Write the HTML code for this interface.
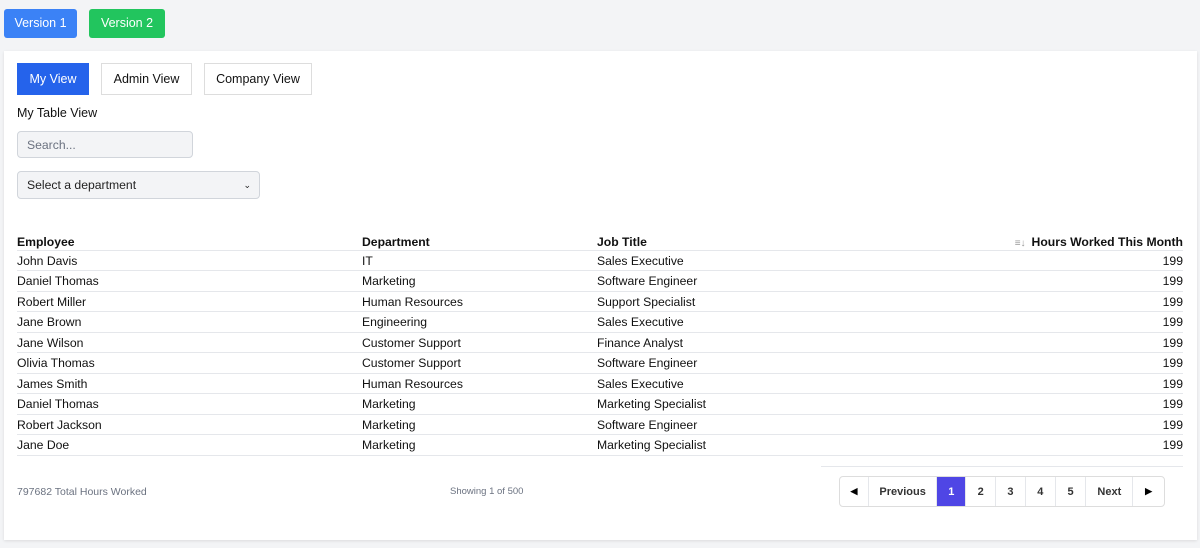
<!DOCTYPE html>
<html><head><style>
*{box-sizing:border-box;margin:0;padding:0}
body{width:1200px;height:548px;background:#f3f4f6;font-family:"Liberation Sans",sans-serif;position:relative;overflow:hidden;color:#111}
.abs{position:absolute}
.vbtn{position:absolute;top:9px;height:29px;color:#fff;font-size:12.5px;line-height:29px;text-align:center;border-radius:3px}
.card{position:absolute;left:4px;top:51px;width:1193px;height:489px;background:#fff;box-shadow:0 1px 3px rgba(0,0,0,.1)}
.tab{position:absolute;top:63px;height:32px;line-height:30px;font-size:12.5px;text-align:center;border:1px solid #ddd;background:#fff}
table{position:absolute;left:17px;top:230px;width:1166px;border-collapse:collapse;font-size:12.2px}
th{text-align:left;font-weight:bold;height:20px;border-bottom:1px solid #e5e7eb;padding:0;vertical-align:bottom;padding-bottom:1px}
td{height:20.5px;border-bottom:1px solid #e5e7eb;padding:0;padding-top:1px}
.r{text-align:right}
.pg{position:absolute;top:476px;height:31px;left:839px;width:326px;border:1px solid #ddd;border-radius:4px;display:flex;font-size:11px;font-weight:bold;color:#333;overflow:hidden}
.pg div{display:flex;align-items:center;justify-content:center;border-right:1px solid #e5e7eb}
.pg div:last-child{border-right:none}
.tri{font-size:9px;color:#000}
</style></head><body>
<div class="vbtn" style="left:4px;width:73px;background:#3b82f6">Version 1</div>
<div class="vbtn" style="left:89px;width:76px;background:#22c55e">Version 2</div>
<div class="card"></div>
<div class="tab" style="left:17px;width:72px;background:#2563eb;color:#fff;border-color:#2563eb">My View</div>
<div class="tab" style="left:101px;width:91px">Admin View</div>
<div class="tab" style="left:204px;width:108px">Company View</div>
<div class="abs" style="left:17px;top:106px;font-size:12.5px">My Table View</div>
<div class="abs" style="left:17px;top:131px;width:176px;height:27px;background:#f3f4f6;border:1px solid #d1d5db;border-radius:4px;font-size:12.2px;color:#6b7280;line-height:26px;padding-left:9px">Search...</div>
<div class="abs" style="left:17px;top:171px;width:243px;height:28px;background:#f3f4f6;border:1px solid #d1d5db;border-radius:4px;font-size:12.2px;color:#222;line-height:27px;padding-left:9px">Select a department<span style="position:absolute;right:8px;top:0;font-size:9px">&#8964;</span></div>
<table>
<tr><th style="width:345px">Employee</th><th style="width:235px">Department</th><th>Job Title</th><th class="r"><span style="color:#999;font-size:10px;font-weight:normal;margin-right:6px">&#8801;&#8595;</span>Hours Worked This Month</th></tr>
<tr><td>John Davis</td><td>IT</td><td>Sales Executive</td><td class="r">199</td></tr>
<tr><td>Daniel Thomas</td><td>Marketing</td><td>Software Engineer</td><td class="r">199</td></tr>
<tr><td>Robert Miller</td><td>Human Resources</td><td>Support Specialist</td><td class="r">199</td></tr>
<tr><td>Jane Brown</td><td>Engineering</td><td>Sales Executive</td><td class="r">199</td></tr>
<tr><td>Jane Wilson</td><td>Customer Support</td><td>Finance Analyst</td><td class="r">199</td></tr>
<tr><td>Olivia Thomas</td><td>Customer Support</td><td>Software Engineer</td><td class="r">199</td></tr>
<tr><td>James Smith</td><td>Human Resources</td><td>Sales Executive</td><td class="r">199</td></tr>
<tr><td>Daniel Thomas</td><td>Marketing</td><td>Marketing Specialist</td><td class="r">199</td></tr>
<tr><td>Robert Jackson</td><td>Marketing</td><td>Software Engineer</td><td class="r">199</td></tr>
<tr><td>Jane Doe</td><td>Marketing</td><td>Marketing Specialist</td><td class="r">199</td></tr>
</table>
<div class="abs" style="left:821px;top:466px;width:362px;height:1px;background:#e5e7eb"></div>
<div class="abs" style="left:17px;top:486px;font-size:10.5px;color:#6b7280">797682 Total Hours Worked</div>
<div class="abs" style="left:450px;top:486px;font-size:9.5px;color:#6b7280">Showing 1 of 500</div>
<div class="pg">
<div class="tri" style="width:29px">&#9664;</div>
<div style="width:69px">Previous</div>
<div style="width:29px;background:#4f46e5;color:#fff">1</div>
<div style="width:30px">2</div>
<div style="width:30px">3</div>
<div style="width:30px">4</div>
<div style="width:31px">5</div>
<div style="width:47px">Next</div>
<div class="tri" style="width:31px">&#9654;</div>
</div>
</body></html>
